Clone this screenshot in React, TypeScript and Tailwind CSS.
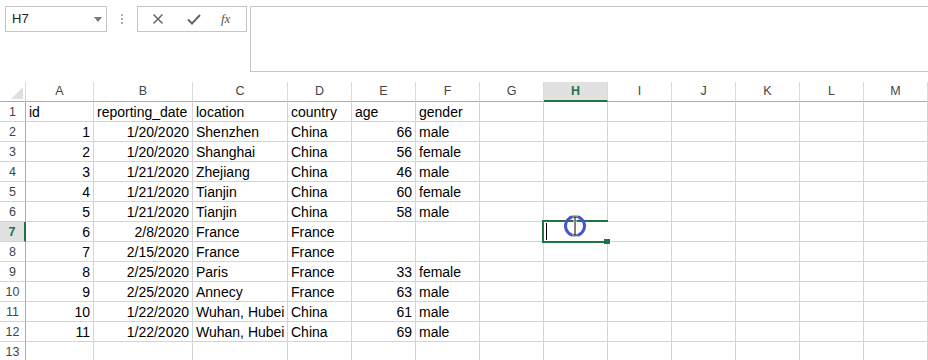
import React from "react";

const cols = [
  { l: "A", w: 68 },
  { l: "B", w: 99 },
  { l: "C", w: 95 },
  { l: "D", w: 64 },
  { l: "E", w: 64 },
  { l: "F", w: 64 },
  { l: "G", w: 64 },
  { l: "H", w: 64 },
  { l: "I", w: 64 },
  { l: "J", w: 64 },
  { l: "K", w: 64 },
  { l: "L", w: 64 },
  { l: "M", w: 64 },
];

// [value, rightAligned]
type Cell = [string, boolean];

const rows: Cell[][] = [
  [["id", false], ["reporting_date", false], ["location", false], ["country", false], ["age", false], ["gender", false]],
  [["1", true], ["1/20/2020", true], ["Shenzhen", false], ["China", false], ["66", true], ["male", false]],
  [["2", true], ["1/20/2020", true], ["Shanghai", false], ["China", false], ["56", true], ["female", false]],
  [["3", true], ["1/21/2020", true], ["Zhejiang", false], ["China", false], ["46", true], ["male", false]],
  [["4", true], ["1/21/2020", true], ["Tianjin", false], ["China", false], ["60", true], ["female", false]],
  [["5", true], ["1/21/2020", true], ["Tianjin", false], ["China", false], ["58", true], ["male", false]],
  [["6", true], ["2/8/2020", true], ["France", false], ["France", false], ["", true], ["", false]],
  [["7", true], ["2/15/2020", true], ["France", false], ["France", false], ["", true], ["", false]],
  [["8", true], ["2/25/2020", true], ["Paris", false], ["France", false], ["33", true], ["female", false]],
  [["9", true], ["2/25/2020", true], ["Annecy", false], ["France", false], ["63", true], ["male", false]],
  [["10", true], ["1/22/2020", true], ["Wuhan, Hubei", false], ["China", false], ["61", true], ["male", false]],
  [["11", true], ["1/22/2020", true], ["Wuhan, Hubei", false], ["China", false], ["69", true], ["male", false]],
  [],
];

function FormulaBar() {
  return (
    <div className="flex h-[82px] items-start pt-[6px] pl-[5px]">
      <div className="relative flex h-[26px] w-[102px] items-center border border-[#c6c6c6] pl-[6px] text-[13px] text-[#222]">
        H7
        <svg className="absolute left-[88px] top-[10px]" width="8" height="5" viewBox="0 0 8 5">
          <path d="M0 0h8L4 5z" fill="#777" />
        </svg>
      </div>
      <div className="flex h-[26px] w-[30px] flex-col items-center justify-center gap-[2px]">
        <span className="h-[2px] w-[2px] bg-[#b0b0b0]" />
        <span className="h-[2px] w-[2px] bg-[#b0b0b0]" />
        <span className="h-[2px] w-[2px] bg-[#b0b0b0]" />
      </div>
      <div className="flex h-[26px] w-[110px] items-center border border-[#c6c6c6]">
        <svg className="ml-[14px]" width="12" height="12" viewBox="0 0 12 12">
          <path d="M1.5 1.5l9 9M10.5 1.5l-9 9" stroke="#666" strokeWidth="1.5" />
        </svg>
        <svg className="ml-[23px]" width="14" height="12" viewBox="0 0 14 12">
          <path d="M1 6.5l4 4L13 2" stroke="#666" strokeWidth="2" fill="none" />
        </svg>
        <span className="ml-[20px] font-['Liberation_Serif',serif] text-[13px] italic text-[#555]">fx</span>
      </div>
      <div className="ml-[3px] h-[66px] flex-1 border-y border-l border-[#c6c6c6]" />
    </div>
  );
}

export default function App() {
  return (
    <div className="h-[360px] w-[928px] overflow-hidden bg-white font-['Liberation_Sans',Arial,sans-serif]">
      <FormulaBar />
      <div className="relative">
        <div className="flex h-[20px]">
          <div className="relative w-[26px] shrink-0 border-r border-b border-r-[#dadada] border-b-[#ababab]">
            <svg className="absolute left-[11px] top-[5px]" width="12" height="12" viewBox="0 0 12 12">
              <path d="M12 0v12H0z" fill="#dfdfdf" />
            </svg>
          </div>
          {cols.map((c) =>
            c.l === "H" ? (
              <div
                key={c.l}
                style={{ width: c.w }}
                className="flex shrink-0 items-center justify-center border-r border-b-2 border-r-[#dadada] border-b-[#217346] bg-[#e1e1e1] pt-[1px] text-[12.5px] font-bold text-[#217346]"
              >
                {c.l}
              </div>
            ) : (
              <div
                key={c.l}
                style={{ width: c.w }}
                className="flex shrink-0 items-center justify-center border-r border-b border-r-[#dadada] border-b-[#ababab] text-[12.5px] text-[#444]"
              >
                {c.l}
              </div>
            )
          )}
        </div>
        {rows.map((r, i) => {
          const sel = i === 6;
          return (
            <div key={i} className="flex h-[20px]">
              <div
                className={
                  sel
                    ? "flex w-[26px] shrink-0 items-center justify-center border-r-2 border-b border-r-[#217346] border-b-[#d4d4d4] bg-[#e1e1e1] pt-[1px] text-[12.5px] font-bold text-[#217346]"
                    : "flex w-[26px] shrink-0 items-center justify-center border-r border-b border-r-[#ababab] border-b-[#d4d4d4] pt-[1px] text-[12.5px] text-[#444]"
                }
              >
                {i + 1}
              </div>
              {cols.map((c, j) => {
                const cell = r[j];
                return (
                  <div
                    key={c.l}
                    style={{ width: c.w }}
                    className={
                      "flex shrink-0 items-center overflow-hidden whitespace-nowrap border-r border-b border-[#d4d4d4] px-[3px] pt-[2px] text-[14px] text-black " +
                      (cell && cell[1] ? "justify-end" : "justify-start")
                    }
                  >
                    {cell ? cell[0] : ""}
                  </div>
                );
              })}
            </div>
          );
        })}
        {/* active cell in edit mode */}
        <div className="absolute left-[542px] top-[138px] h-[23px] w-[66px] border-y-2 border-l-2 border-[#217346] bg-white">
          <div className="absolute left-[2px] top-[1px] h-[17px] w-px bg-black" />
        </div>
        <div className="absolute left-[604px] top-[157px] h-[5px] w-[6px] bg-[#217346]" />
        <svg className="absolute left-[563px] top-[132px]" width="24" height="24" viewBox="0 0 24 24">
          <circle cx="12" cy="12" r="9.5" fill="none" stroke="#4455cc" strokeWidth="3" />
          <path d="M9 3h6M9 21h6M12 3v18" stroke="#fff" strokeWidth="3" />
          <path d="M9 3h6M9 21h6M12 3v18" stroke="#000" strokeWidth="1" />
        </svg>
      </div>
    </div>
  );
}
